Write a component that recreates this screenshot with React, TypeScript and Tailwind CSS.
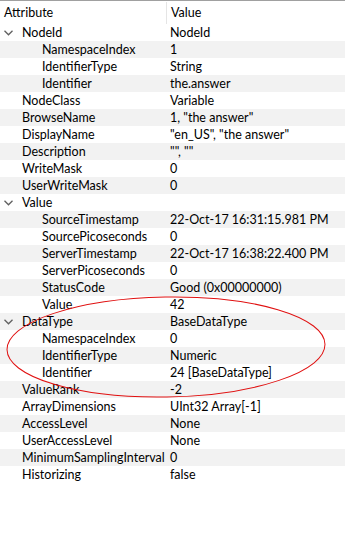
const rows: { name: string; value: string; level: number; expand?: boolean }[] = [
  { name: 'NodeId', value: 'NodeId', level: 0, expand: true },
  { name: 'NamespaceIndex', value: '1', level: 1 },
  { name: 'IdentifierType', value: 'String', level: 1 },
  { name: 'Identifier', value: 'the.answer', level: 1 },
  { name: 'NodeClass', value: 'Variable', level: 0 },
  { name: 'BrowseName', value: '1, "the answer"', level: 0 },
  { name: 'DisplayName', value: '"en_US", "the answer"', level: 0 },
  { name: 'Description', value: '"", ""', level: 0 },
  { name: 'WriteMask', value: '0', level: 0 },
  { name: 'UserWriteMask', value: '0', level: 0 },
  { name: 'Value', value: '', level: 0, expand: true },
  { name: 'SourceTimestamp', value: '22-Oct-17 16:31:15.981 PM', level: 1 },
  { name: 'SourcePicoseconds', value: '0', level: 1 },
  { name: 'ServerTimestamp', value: '22-Oct-17 16:38:22.400 PM', level: 1 },
  { name: 'ServerPicoseconds', value: '0', level: 1 },
  { name: 'StatusCode', value: 'Good (0x00000000)', level: 1 },
  { name: 'Value', value: '42', level: 1 },
  { name: 'DataType', value: 'BaseDataType', level: 0, expand: true },
  { name: 'NamespaceIndex', value: '0', level: 1 },
  { name: 'IdentifierType', value: 'Numeric', level: 1 },
  { name: 'Identifier', value: '24 [BaseDataType]', level: 1 },
  { name: 'ValueRank', value: '-2', level: 0 },
  { name: 'ArrayDimensions', value: 'UInt32 Array[-1]', level: 0 },
  { name: 'AccessLevel', value: 'None', level: 0 },
  { name: 'UserAccessLevel', value: 'None', level: 0 },
  { name: 'MinimumSamplingInterval', value: '0', level: 0 },
  { name: 'Historizing', value: 'false', level: 0 },
]

function Chevron() {
  return (
    <svg width="9" height="6" viewBox="0 0 9 6" className="absolute left-[4px] top-[6px]">
      <path d="M0.5 0.8 L4.5 4.8 L8.5 0.8" fill="none" stroke="#606060" strokeWidth="1.3" />
    </svg>
  )
}

export default function App() {
  return (
    <div className="relative h-[549px] w-[345px] overflow-hidden bg-white font-['Lato',sans-serif] text-[12.5px] leading-[17px] text-black">
      <div className="h-px bg-[#a0a0a0]" />
      <div className="flex h-[23px] items-center">
        <div className="w-[166px] pl-[4px]">Attribute</div>
        <div className="h-[22px] w-px bg-[#e5e5e5]" />
        <div className="pl-[4px]">Value</div>
      </div>
      <div className="flex flex-col">
        {rows.map((r, i) => (
          <div key={i} className={`flex h-[17px] ${i % 2 === 1 ? 'bg-[#f2f2f2]' : 'bg-white'}`}>
            <div className={`relative w-[170px] shrink-0 whitespace-nowrap ${r.level ? 'pl-[42px]' : 'pl-[22px]'}`}>
              {r.expand && <Chevron />}
              {r.name}
            </div>
            <div className="whitespace-nowrap">{r.value}</div>
          </div>
        ))}
      </div>
      <svg className="pointer-events-none absolute left-0 top-0" width="345" height="549">
        <ellipse cx="166" cy="347" rx="159" ry="50" fill="none" stroke="#e01010" strokeWidth="1" transform="rotate(-1 166 347)" />
      </svg>
    </div>
  )
}
